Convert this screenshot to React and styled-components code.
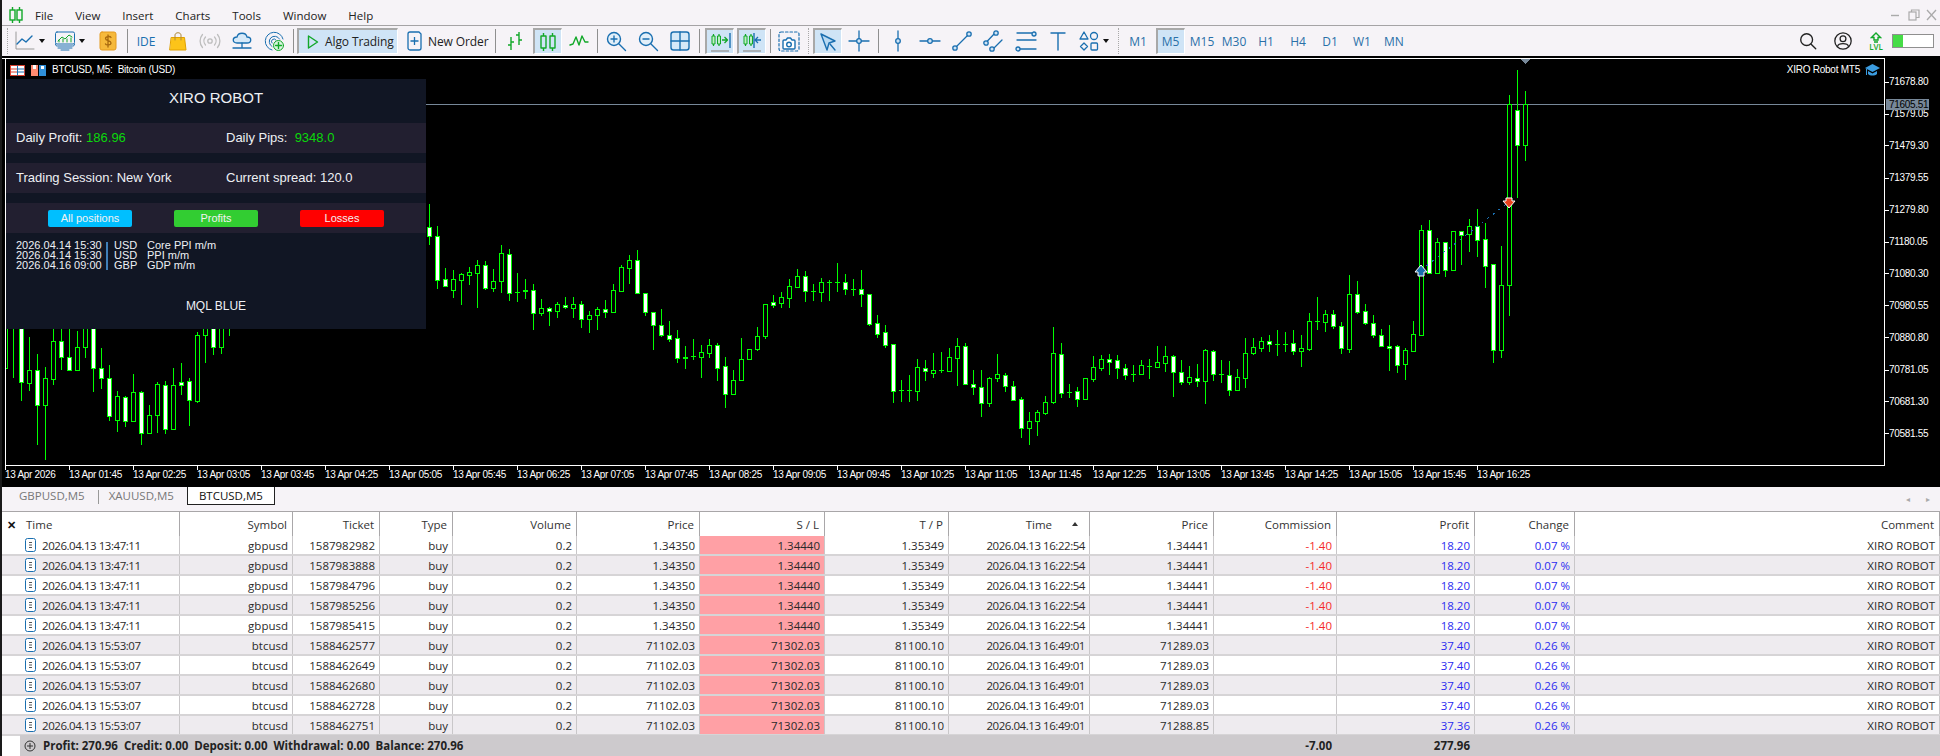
import React from 'react'
import styled, { createGlobalStyle } from 'styled-components'

const BLUE = '#1a6fb0'
const GREEN = '#12a829'
const UI_FONT = '"Open Sans", "Noto Sans", sans-serif'
const CHART_FONT = '"Liberation Sans", Arial, sans-serif'

const Global = createGlobalStyle`
  html, body { margin: 0; padding: 0; background: #f6f3f7; overflow: hidden; }
  * { box-sizing: border-box; }
`

const Page = styled.div`
  position: relative;
  width: 1940px;
  height: 756px;
  overflow: hidden;
  display: flex;
  flex-direction: column;
  background: #f6f3f7;
  font-family: ${UI_FONT};
  color: #222;

  &::before {
    content: '';
    position: absolute;
    left: 0;
    top: 0;
    bottom: 0;
    width: 2px;
    background: #1a1a1a;
    z-index: 3;
  }
`

/* menu */
const MenuBar = styled.div`
  height: 26px;
  flex: none;
  display: flex;
  align-items: center;
  padding: 5px 0 0 9px;
  border-bottom: 1px solid #a5a3a5;
  font-size: 11.5px;
`
const MenuItems = styled.div`
  display: flex;
  gap: 22px;
  margin-left: 12px;
`
const WindowButtons = styled.div`
  margin-left: auto;
  display: flex;
  align-items: center;
  gap: 4px;
  padding-right: 1px;
`

/* toolbar */
const Toolbar = styled.div`
  height: 30px;
  flex: none;
  display: flex;
  align-items: center;
  padding-left: 2px;
  font-size: 12px;
`
const Tool = styled.div`
  flex: none;
  width: ${p => p.$w || 29}px;
  margin: 0 ${p => (p.$w ? 0 : 1.5)}px;
  height: 26px;
  display: flex;
  align-items: center;
  justify-content: center;
  color: ${BLUE};
  ${p => p.$active && `
    background: #cfe4f6;
    border-left: 2px solid #a8a8a8;
    border-top: 2px solid #a8a8a8;
    border-right: 1px solid #fff;
    border-bottom: 1px solid #fff;
  `}
`
const Tf = styled(Tool)`
  font-size: 12px;
  color: #2a70a8;
`
const Drop = styled.div`
  flex: none;
  width: ${p => p.$w || 38}px;
  margin-right: ${p => (p.$w ? 0 : 2)}px;
  padding-left: ${p => (p.$w ? 4 : 2)}px;
  display: flex;
  align-items: center;
  gap: 2px;
`
const Arrow = styled.span`
  width: 0;
  height: 0;
  margin-left: 1px;
  border-left: 3.5px solid transparent;
  border-right: 3.5px solid transparent;
  border-top: 4px solid #111;
`
const Sep = styled.div`
  flex: none;
  width: ${p => p.$w || 6}px;
  height: 24px;
  display: flex;
  justify-content: center;

  &::after {
    content: '';
    width: 1px;
    background: #8f8f8f;
  }
`
const Grip = styled.div`
  flex: none;
  width: ${p => p.$w || 6}px;
  height: 26px;
  display: flex;
  justify-content: center;

  &::after {
    content: '';
    border-left: 1px dotted #a8a8a8;
  }
`
const TextButton = styled.div`
  flex: none;
  width: ${p => p.$w}px;
  margin-left: ${p => p.$ml || 0}px;
  height: 26px;
  display: flex;
  align-items: center;
  gap: 6px;
  padding-left: ${p => p.$pl}px;
  white-space: nowrap;
  letter-spacing: -0.1px;
  ${p => p.$active && `
    background: #cfe4f6;
    border-left: 2px solid #a8a8a8;
    border-top: 2px solid #a8a8a8;
    border-right: 1px solid #fff;
    border-bottom: 1px solid #fff;
  `}
`
const RightTools = styled.div`
  margin-left: auto;
  padding-right: 6px;
  display: flex;
  align-items: center;
`
const Level = styled.div`
  width: 42px;
  height: 14px;
  border: 1px solid #8f8f8f;
  background: #fff;
`
const LevelFill = styled.div`
  width: 10px;
  height: 100%;
  background: #46dc46;
`
const LevelIcon = styled.div`
  display: flex;
  flex-direction: column;
  align-items: center;
  color: #12a829;
  font-size: 8px;
  line-height: 8px;
  font-weight: 600;
`

/* chart */
const ChartArea = styled.div`
  position: relative;
  height: 431px;
  flex: none;
  background: #000;
`
const ChartSvg = styled.svg`
  display: block;

  text {
    font-family: ${CHART_FONT};
    font-size: 10px;
    letter-spacing: -0.3px;
    fill: #fff;
  }
`
const ChartTitle = styled.div`
  position: absolute;
  left: 10px;
  top: 7px;
  display: flex;
  align-items: center;
  gap: 6px;
  color: #fff;
  font: 10px/14px ${CHART_FONT};
  letter-spacing: -0.25px;
  white-space: pre;
`
const RobotLabel = styled.div`
  position: absolute;
  right: 60px;
  top: 7px;
  display: flex;
  align-items: center;
  gap: 5px;
  color: #fff;
  font: 10px/14px ${CHART_FONT};
  letter-spacing: -0.25px;
`

/* panel on the chart */
const Panel = styled.div`
  position: absolute;
  left: 6px;
  top: 23px;
  width: 420px;
  height: 250px;
  display: flex;
  flex-direction: column;
  background: #111624;
  color: #eef0f4;
  font-family: ${CHART_FONT};
`
const PanelTitle = styled.div`
  height: 44px;
  flex: none;
  display: flex;
  align-items: center;
  justify-content: center;
  padding-bottom: 8px;
  font-size: 15px;
`
const StatRow = styled.div`
  height: 30px;
  flex: none;
  margin-bottom: 10px;
  display: grid;
  grid-template-columns: 210px 1fr;
  align-items: center;
  padding: 0 0 2px 10px;
  background: #221f30;
  font-size: 13px;
  white-space: pre;
`
const Good = styled.span`
  color: #0bd80b;
`
const ButtonRow = styled.div`
  height: 30px;
  flex: none;
  display: flex;
  align-items: center;
  gap: 42px;
  padding-left: 42px;
  background: #221f30;
`
const PanelButton = styled.div`
  width: 84px;
  height: 17px;
  border-radius: 2px;
  display: flex;
  align-items: center;
  justify-content: center;
  padding-bottom: 1px;
  background: ${p => p.$bg};
  color: #f2f2f2;
  font-size: 11px;
`
const News = styled.div`
  display: flex;
  padding: 9px 0 0 10px;
  font-size: 11px;
  line-height: 10px;
`
const NewsCol = styled.div`
  width: ${p => p.$w}px;
  margin-top: -2px;
  white-space: nowrap;
`
const NewsBar = styled.div`
  width: 2px;
  margin: 0 6px 0 0;
  background: #3f7fb8;
`
const PanelFoot = styled.div`
  height: 44px;
  margin-top: auto;
  display: flex;
  align-items: center;
  justify-content: center;
  padding-bottom: 2px;
  font-size: 12px;
`

/* tabs */
const TabBar = styled.div`
  height: 25px;
  flex: none;
  display: flex;
  align-items: flex-start;
  padding-left: 19px;
  border-bottom: 1px solid #a8a6a8;
  font-size: 11.5px;
`
const Tab = styled.div`
  height: 18px;
  padding-top: 1px;
  line-height: 16px;
  color: ${p => (p.$active ? '#111' : '#777')};
  ${p => p.$active && `
    width: 88px;
    text-align: center;
    background: #fff;
    border: 1px solid #222;
    border-top: none;
    margin-left: 13px;
  `}
`
const TabDivider = styled.div`
  width: 1px;
  height: 14px;
  margin: 3px 10px 0 13px;
  background: #999;
`
const TabArrows = styled.div`
  margin-left: auto;
  display: flex;
  gap: 16px;
  padding: 6px 10px 0 0;
  color: #aaa;
  font-size: 8px;
`

/* trade table */
const REST_COLUMNS = '113px 87px 73px 124px 123px 125px 124px 141px 124px 123px 138px 100px 1fr'

const Table = styled.div`
  flex: 1;
  display: flex;
  flex-direction: column;
  background: #fff;
  font-size: 11.5px;
`
const Row = styled.div`
  display: grid;
  grid-template-columns: 180px ${REST_COLUMNS};
  height: ${p => p.$h || 20}px;
  flex: none;
  background: ${p => (p.$alt ? '#eeebef' : '#fff')};
  border-bottom: ${p => (p.$plain ? 'none' : '2px solid #d6d4d6')};
`
const Cell = styled.div`
  display: flex;
  align-items: center;
  justify-content: flex-end;
  padding-right: 4px;
  border-right: 1px solid #c9c7c9;
  white-space: nowrap;
  color: ${p => p.$color || '#2a2a2a'};
  ${p => p.$tight && 'letter-spacing: -0.45px;'}
  ${p => p.$pink && 'background: #ffa0a5;'}
`
const HeadCell = styled(Cell)`
  padding-right: 5px;
  border-right: 1px solid #a9a7a9;
  color: #333;
`
const SortCell = styled(HeadCell)`
  gap: 20px;
  padding-right: 11px;
`
const SortMark = styled.span`
  width: 0;
  height: 0;
  border-left: 3px solid transparent;
  border-right: 3px solid transparent;
  border-bottom: 4px solid #333;
`
const FirstHead = styled(HeadCell)`
  justify-content: flex-start;
  padding-left: 7px;
  gap: 10px;
`
const Close = styled.span`
  font-weight: 700;
  font-size: 11px;
  color: #111;
`
const FirstCell = styled(Cell)`
  justify-content: flex-start;
  padding-left: 25px;
  gap: 6px;
`
const Summary = styled.div`
  display: grid;
  grid-template-columns: 160px ${REST_COLUMNS};
  height: 21px;
  flex: none;
  margin-left: 20px;
  margin-top: -1px;
  background: #cdcacd;
  font-weight: 700;
  font-size: 11.5px;
  color: #222;
`
const SummaryText = styled.div`
  grid-column: 1 / span 10;
  display: flex;
  align-items: center;
  gap: 7px;
  padding-left: 4px;
  white-space: pre;
`
const SummaryNum = styled.div`
  display: flex;
  align-items: center;
  justify-content: flex-end;
  padding-right: 5px;
`

/* icons */
const Svg = ({ s = 22, children, ...rest }) => (
  <svg width={s} height={s} viewBox="0 0 22 22" fill="none" strokeLinecap="round" strokeLinejoin="round" {...rest}>
    {children}
  </svg>
)

const Logo = () => (
  <svg width="14" height="18" viewBox="0 0 14 18" fill="none" stroke="#12a829" strokeWidth="1.4">
    <path d="M3.5 1v16M10.5 1v16" />
    <rect x="1" y="4" width="5" height="10" fill="#f6f3f7" />
    <rect x="8" y="4" width="5" height="10" fill="#f6f3f7" />
  </svg>
)
const LineChartIcon = () => (
  <Svg>
    <path d="M2 2v17h18" stroke="#999" />
    <path d="M3 14l5-5 4 3 6-6" stroke={BLUE} strokeWidth="1.4" />
  </Svg>
)
const MonitorIcon = () => (
  <Svg>
    <rect x="1.5" y="2" width="19" height="12" rx="1.5" stroke={BLUE} />
    <path d="M4 11l4-4 3 2 4-4 3 2M5 12v-2M9 12v-3M13 12V9M17 12V8" stroke={GREEN} />
    <path d="M1.5 14c0 2 1 2 2 2h15c1 0 2 0 2-2M4 18h14M7 20h8" stroke={BLUE} />
  </Svg>
)
const DollarIcon = () => (
  <Svg>
    <rect x="3" y="2" width="16" height="18" rx="2" fill="#f6b93b" stroke="#e49a1e" />
    <path d="M14 7.5c-.5-1.3-5.5-1.6-5.5 1 0 2.8 5.5 1.6 5.5 4.4 0 2.5-5 2.3-5.5 1M11 5v12" stroke="#a8690e" strokeWidth="1.3" />
  </Svg>
)
const BagIcon = () => (
  <Svg>
    <path d="M4.5 7.500h13l1.500 12.500h-16z" fill="#fcc419" stroke="#e0a100" />
    <path d="M8 10V5c0-3 6-3 6 0v5" stroke="#b08a3a" />
  </Svg>
)
const SignalIcon = () => (
  <Svg stroke="#bdbdbd" strokeWidth="1.3">
    <circle cx="11" cy="11" r="2.2" />
    <path d="M6.5 7a6 6 0 0 0 0 8M15.5 7a6 6 0 0 1 0 8M3.5 4.500a10 10 0 0 0 0 13M18.5 4.500a10 10 0 0 1 0 13" />
  </Svg>
)
const CloudIcon = () => (
  <Svg stroke={BLUE} strokeWidth="1.3">
    <path d="M6 13c-5 0-5-6 0-6 1-5 9-5 10 0 5 0 5 6 0 6z" fill="#d6e9f8" />
    <path d="M11 13v5M2 18h18" />
  </Svg>
)
const TargetIcon = () => (
  <Svg stroke={BLUE}>
    <path d="M9 20A9 9 0 1 1 20 9M9 16.500A5.500 5.500 0 1 1 16.500 9M9 13a2.500 2.500 0 1 1 4-3" />
    <circle cx="15.500" cy="15.500" r="5" fill="#d9f5df" stroke={GREEN} />
    <path d="M15.500 12.500v6M12.500 15.500h6" stroke={GREEN} strokeWidth="1.4" />
  </Svg>
)
const PlayIcon = () => (
  <svg width="12" height="16" viewBox="0 0 12 16" fill="none" stroke={GREEN} strokeWidth="1.4" strokeLinejoin="round">
    <path d="M1.5 2l9 6-9 6z" />
  </svg>
)
const OrderIcon = () => (
  <svg width="15" height="20" viewBox="0 0 15 20" fill="none" stroke={BLUE} strokeWidth="1.3" strokeLinejoin="round">
    <path d="M1 3a2 2 0 0 1 2-2h9l2 2v14a2 2 0 0 1-2 2H3a2 2 0 0 1-2-2z" />
    <path d="M7.500 6v8M3.500 10h8" />
  </svg>
)
const BarsIcon = () => (
  <Svg stroke={GREEN} strokeWidth="1.4" strokeLinecap="butt">
    <path d="M7 7v13M4 15h3M7 12h3M15 2v13M12 5h3M15 10h3" />
  </Svg>
)
const CandlesIcon = () => (
  <Svg stroke={GREEN} strokeWidth="1.4" strokeLinecap="butt">
    <path d="M6.500 2v18M15.500 2v18" />
    <rect x="4" y="5" width="5" height="12" fill="#cfe4f6" />
    <rect x="13" y="5" width="5" height="12" fill="#cfe4f6" />
  </Svg>
)
const LineIcon = () => (
  <Svg stroke={GREEN} strokeWidth="1.4">
    <path d="M2 15l3-1 3-7 3 8 3-9 3 6 3 0" />
  </Svg>
)
const ZoomIcon = ({ plus }) => (
  <Svg stroke={BLUE} strokeWidth="1.4">
    <circle cx="9" cy="9" r="6.500" fill="#e2eff9" />
    <path d="M14 14l6.500 6.500M6 9h6" />
    {plus && <path d="M9 6v6" />}
  </Svg>
)
const GridIcon = () => (
  <Svg stroke={BLUE} strokeWidth="1.4">
    <rect x="2" y="2" width="18" height="18" rx="2.500" fill="#d6e9f8" />
    <path d="M11 2v18M2 11h18" />
  </Svg>
)
const ShiftIcon = ({ back }) => (
  <Svg strokeLinecap="butt">
    <path d="M4.500 3v12M10 3v12" stroke={GREEN} strokeWidth="1.2" />
    <rect x="3" y="5" width="3" height="8" fill="#bdf0c4" stroke={GREEN} />
    <rect x="8.500" y="5" width="3" height="8" fill="#bdf0c4" stroke={GREEN} />
    <path d={back ? 'M20 9h-6M17 6l-3 3 3 3' : 'M13 9h5M15.500 6l3 3-3 3'} stroke={back ? BLUE : GREEN} strokeWidth="1.3" />
    <path d={back ? 'M13 2v15' : 'M21 2v15'} stroke={BLUE} strokeWidth="1.4" />
    <path d="M2 20h18" stroke="#9a9a9a" strokeWidth="1.4" />
  </Svg>
)
const ShotIcon = () => (
  <Svg stroke={BLUE} strokeWidth="1.2">
    <rect x="1" y="2" width="20" height="19" rx="2" strokeDasharray="2.500 2" />
    <path d="M6 10h2l1.500-2h3l1.500 2h2a1 1 0 0 1 1 1v7a1 1 0 0 1-1 1H6a1 1 0 0 1-1-1v-7a1 1 0 0 1 1-1z" fill="#fff" strokeWidth="1.4" />
    <circle cx="11" cy="14.500" r="2.300" strokeWidth="1.4" />
  </Svg>
)
const CursorIcon = () => (
  <Svg stroke={BLUE} strokeWidth="1.4">
    <path d="M4 3l14 7-6 2-2 7z" fill="#b8d9f2" />
    <path d="M13 13l5 6" />
  </Svg>
)
const CrossIcon = () => (
  <Svg stroke={BLUE} strokeWidth="1.3">
    <path d="M11 1v20M1 11h20" />
    <circle cx="11" cy="11" r="2.300" fill="#cfe4f6" />
  </Svg>
)
const VLineIcon = () => (
  <Svg stroke={BLUE} strokeWidth="1.3">
    <path d="M11 1v20" />
    <circle cx="11" cy="11" r="2.300" fill="#cfe4f6" />
  </Svg>
)
const HLineIcon = () => (
  <Svg stroke={BLUE} strokeWidth="1.3">
    <path d="M1 11h20" />
    <circle cx="11" cy="11" r="2.300" fill="#cfe4f6" />
  </Svg>
)
const TrendIcon = () => (
  <Svg stroke={BLUE} strokeWidth="1.3">
    <path d="M5 17L17 5" />
    <circle cx="4" cy="18" r="2.200" fill="#cfe4f6" />
    <circle cx="18" cy="4" r="2.200" fill="#cfe4f6" />
  </Svg>
)
const ChannelIcon = () => (
  <Svg stroke={BLUE} strokeWidth="1.3">
    <path d="M3.500 12L12 3M10 19l9-9" />
    <circle cx="3" cy="13" r="2.200" fill="#cfe4f6" />
    <circle cx="13" cy="3" r="2.200" fill="#cfe4f6" />
    <circle cx="9" cy="19" r="2.200" fill="#cfe4f6" />
  </Svg>
)
const FiboIcon = () => (
  <Svg stroke={BLUE} strokeWidth="1.3">
    <path d="M2 3h15M2 10h19M5 19h16" />
    <circle cx="19" cy="4" r="2" fill="#cfe4f6" />
    <circle cx="3" cy="19" r="2" fill="#cfe4f6" />
  </Svg>
)
const TextToolIcon = () => (
  <Svg stroke={BLUE} strokeWidth="1.4">
    <path d="M4 3h14M11 3v17" />
  </Svg>
)
const ShapesIcon = () => (
  <Svg stroke={BLUE} strokeWidth="1.3">
    <path d="M6 2l4 7H2z" />
    <circle cx="16" cy="6" r="3.500" />
    <path d="M6 13l3.500 3.500L6 20l-3.500-3.500z" />
    <rect x="13" y="13" width="6.500" height="7" rx="1" />
  </Svg>
)
const SearchIcon = () => (
  <Svg s={20} stroke="#222" strokeWidth="1.5">
    <circle cx="9.500" cy="9.500" r="6.500" />
    <path d="M14.500 14.500l5 5" />
  </Svg>
)
const UserIcon = () => (
  <Svg s={20} stroke="#222" strokeWidth="1.4">
    <circle cx="11" cy="11" r="9" />
    <circle cx="11" cy="8.500" r="3.200" />
    <path d="M5 17c1-4 11-4 12 0" />
  </Svg>
)
const UpIcon = () => (
  <svg width="12" height="11" viewBox="0 0 12 11" fill="none" stroke="#12a829" strokeWidth="1.4">
    <path d="M6 1L1.500 5.500h2.500v2.500h4V5.500h2.500zM4 10h4" />
  </svg>
)
const WinMin = () => (
  <svg width="14" height="14" viewBox="0 0 14 14" stroke="#aaa" strokeWidth="1.4"><path d="M2 7.500h8" /></svg>
)
const WinRestore = () => (
  <svg width="14" height="14" viewBox="0 0 14 14" fill="none" stroke="#aaa" strokeWidth="1.2">
    <rect x="2" y="4" width="7" height="8" /><path d="M4.500 4V2H12v7.500H9" />
  </svg>
)
const WinClose = () => (
  <svg width="14" height="14" viewBox="0 0 14 14" stroke="#aaa" strokeWidth="1.3"><path d="M2 2l9 10M11 2l-9 10" /></svg>
)
const TableIcon = () => (
  <svg width="15" height="11" viewBox="0 0 15 11" stroke="#d8412f" fill="#fff">
    <rect x="0.500" y="0.500" width="14" height="10" />
    <path d="M0.500 4h6.500M0.500 7h6.500" />
    <path d="M7.500 0.500v10M8 4h6.500M8 7h6.500" stroke="#1a6fb0" />
  </svg>
)
const DepthIcon = () => (
  <svg width="15" height="11" viewBox="0 0 15 11">
    <rect x="0" y="0" width="7" height="11" fill="#ff8a70" />
    <rect x="2" y="0" width="3" height="4" fill="#fff" />
    <rect x="8" y="0" width="7" height="11" fill="#2f8fd8" />
    <rect x="10" y="1" width="3" height="3" fill="#fff" />
  </svg>
)
const CapIcon = () => (
  <svg width="15" height="14" viewBox="0 0 15 14" fill="#3b9ce0">
    <path d="M7.500 1L15 5 7.500 9 0 5z" />
    <path d="M3 8v3c2 2 7 2 9 0V8L7.500 10.500z" />
    <rect x="1" y="6" width="1" height="6" />
  </svg>
)
const OrderRowIcon = () => (
  <svg width="11" height="14" viewBox="0 0 11 14" fill="#fff" stroke="#1a6fb0">
    <rect x="0.500" y="0.500" width="10" height="13" rx="2" />
    <path d="M4 4.500h3M4 7h3M4 9.500h3" stroke="#555" />
  </svg>
)
const PlusCircle = () => (
  <svg width="12" height="12" viewBox="0 0 12 12" fill="none" stroke="#333">
    <circle cx="6" cy="6" r="5" />
    <path d="M6 3v6M3 6h6" />
  </svg>
)

/* [high, body top, body bottom, low, white body], bars 29..52 sit under the panel */
const BARS = [
  [320, 325, 368, 368, 0], [300, 305, 320, 378, 0], [300, 305, 381.7, 401, 1], [337.3, 370.3, 383.3, 391, 0],
  [354, 370, 404.7, 445, 1], [367, 378.3, 404.7, 460, 0], [320, 341, 378.7, 385, 0], [320, 341, 356.7, 370, 1],
  [320, 356.7, 369.7, 370, 1], [331, 347, 369.7, 370.7, 0], [320, 325, 347, 358, 0], [320, 325, 367.7, 391.7, 1],
  [348.3, 368.3, 378.3, 389, 1], [365, 378.3, 416.3, 421, 1], [391, 396.3, 419.7, 432, 0], [396, 397.3, 420.7, 427, 1],
  [374.3, 392.3, 420.7, 421.7, 0], [391, 392.3, 432.7, 445, 1], [405, 415.3, 433, 434, 0], [381.7, 384.3, 415.3, 432.7, 0],
  [380.7, 384.7, 428.7, 434, 1], [368, 385.3, 428.7, 429, 0], [363, 382.3, 385.3, 395.3, 1], [378.3, 381.3, 400.3, 426, 1],
  [332.3, 335.3, 401, 402.7, 0], [320, 325, 335.3, 363.3, 0], [320, 325, 347.3, 355, 1], [320, 325, 347.3, 354, 0],
  [320, 322, 325, 336, 0],
  ...Array(24).fill(null),
  [204, 226.7, 236.3, 245, 1], [226, 236.3, 279.7, 289, 1], [268.3, 278.7, 285.7, 286, 1], [270, 279.3, 289.7, 298, 0],
  [273, 274.3, 279.7, 305, 0], [267.3, 272.3, 274.7, 285, 0], [260.3, 265.3, 272.7, 308, 0], [261.3, 265.3, 287.7, 290, 1],
  [269.3, 281.3, 287.7, 292, 0], [245.3, 253.3, 280.7, 292.7, 0], [249.3, 254.3, 292.7, 301, 1], [273.3, 292.3, 292.3, 302, 1],
  [279, 290.3, 291.3, 299, 1], [284, 290.3, 312.7, 330, 1], [299, 308.3, 312.7, 316, 0], [307.3, 308.3, 310.7, 326, 1],
  [302, 304.3, 310.7, 318, 0], [297.3, 304.7, 306.7, 308.7, 1], [297.3, 304.3, 307.7, 318, 0], [301.3, 304.3, 318.7, 328, 1],
  [311.3, 314.7, 318.7, 333, 0], [307.3, 309.3, 314.7, 330, 0], [300, 309.3, 311.7, 318, 1], [284, 290.3, 311.7, 312.3, 0],
  [265.3, 267.3, 290.7, 291, 0], [255.3, 260.3, 267.7, 284, 0], [250.3, 260.3, 292.7, 294, 1], [292.7, 292.7, 311.7, 316, 1],
  [311.7, 311.7, 324.7, 350, 1], [309, 324.7, 334.7, 337, 1], [321, 334.7, 338.7, 342, 1], [330, 337.7, 357.7, 363, 1],
  [346, 356.7, 357.7, 369, 1], [339, 356.3, 356.3, 360, 1], [345, 351.7, 356.7, 378, 0], [339, 345.3, 352.7, 358, 0],
  [343.3, 345.3, 367.7, 381, 1], [357, 365.7, 393.7, 408, 1], [370, 379.7, 393.7, 394, 0], [338, 358.7, 379.7, 380, 0],
  [348.7, 348.7, 358.7, 360, 0], [327, 335.7, 348.7, 351, 0], [304.3, 304.3, 335.7, 339, 0], [295, 302.3, 304.7, 308, 1],
  [292, 297.3, 302.7, 308, 0], [279.3, 286.3, 297.7, 308, 0], [269.3, 276.3, 286.7, 288, 0], [271, 276.3, 290.7, 302, 1],
  [284, 290.7, 290.7, 301, 1], [278.3, 282.3, 291.7, 302, 0], [280.3, 282, 282, 301, 1], [263.3, 282.3, 282.3, 292, 1],
  [274, 282.3, 288.7, 295, 1], [279, 288.7, 288.7, 296, 1], [270, 289.3, 293.7, 307, 1], [294.3, 294.3, 323.7, 326, 1],
  [315.3, 323.3, 333.7, 338, 1], [325.3, 332.3, 344.7, 348, 1], [344.3, 344.3, 390.7, 403, 1],
  [380, 390, 390, 402, 1], [375.3, 390, 390, 402, 1], [359.3, 367.3, 390.7, 401, 0], [360, 367.7, 370.7, 381, 1],
  [353.3, 370.3, 372.7, 378.3, 0], [352, 370.3, 370.3, 372.7, 1], [348.3, 357.3, 370.7, 370.7, 0], [338.3, 346.3, 357.7, 386, 0],
  [343.3, 346.3, 384, 385, 1], [370, 383.7, 386.7, 395.3, 1], [370, 386.7, 402.7, 417, 1], [377.3, 378.3, 402.7, 407, 0],
  [354, 374.3, 377.7, 382, 0], [373.3, 374.7, 385.7, 392, 1], [381.3, 385.7, 400, 401, 1], [397.3, 399.3, 427.7, 438, 1],
  [412.3, 421.3, 427.7, 445, 0], [410, 412.3, 421, 436, 0], [396, 402.3, 413, 415, 0], [327, 353.3, 401.7, 404, 0],
  [343.3, 354.3, 392.7, 398, 1], [384, 392, 392, 398, 1], [387.3, 391.3, 399, 407, 1], [378.3, 378.3, 399, 399, 0],
  [356, 367.3, 378.7, 382, 0], [355.3, 359.3, 367.7, 370.7, 0], [354, 359.3, 361.7, 375.3, 1], [355.3, 360.3, 367.7, 379, 1],
  [364, 367.7, 374.7, 379.7, 1], [365.3, 374, 374, 382, 1], [360, 365.3, 374, 374.3, 0], [359.3, 366.3, 366.3, 379, 1],
  [346, 362.3, 366.7, 367.3, 0], [346, 356.3, 362.7, 372, 0], [355.3, 356.3, 371.7, 397, 1], [360, 371.7, 381.7, 385, 1],
  [366, 377.3, 381.7, 385, 0], [364, 377.7, 380.7, 387, 1], [349.3, 350.3, 380.7, 404, 0], [350.3, 351.3, 373.7, 381, 1],
  [360, 374, 374, 383, 1], [361.3, 374.7, 389.7, 396, 1], [369.3, 377.3, 389.7, 390.7, 0], [338.3, 353.3, 377.7, 388, 0],
  [338.3, 347.3, 353.3, 355.3, 0], [337, 341.3, 347.7, 352.3, 0], [335, 341.3, 344.3, 352, 1], [330.3, 344.3, 344.3, 356, 1],
  [332, 343.7, 343.7, 352.3, 1], [330.3, 343.3, 351.3, 355.3, 1], [335, 348.3, 351.3, 367, 0], [313.3, 321.3, 348.7, 350.7, 0],
  [297.3, 321.3, 321.3, 330, 1], [310, 314.3, 321.7, 332, 0], [310.3, 314.3, 325.7, 329.3, 1], [322.3, 325.7, 348.3, 354, 1],
  [275, 294.3, 348.7, 352.7, 0], [281, 294.3, 311.7, 314, 1], [304, 310.7, 322.7, 325, 1], [315.3, 322.7, 334.7, 337.7, 1],
  [329, 334.7, 345.7, 346.7, 1], [325, 345.7, 347.7, 371, 1], [345, 346.3, 364.7, 373, 1], [348.3, 350.3, 363.7, 380, 0],
  [321.3, 334.3, 350.7, 350.7, 0], [225, 230.3, 334.7, 334.7, 0], [220, 230.3, 272.7, 273.3, 1], [238.3, 242.3, 272.7, 273.7, 0],
  [242.3, 242.3, 269.7, 276.7, 1], [231.3, 231.3, 269.7, 269.7, 0], [231.3, 231.3, 234.7, 265, 1], [219, 226.3, 234.3, 252, 0],
  [209, 226.3, 239.7, 257, 1], [223.3, 239.3, 265.7, 287.7, 1], [264.3, 264.3, 349.7, 362.7, 1], [246, 285.3, 349.7, 358, 0],
  [95, 104.3, 285.3, 315.7, 0], [70, 110, 145.3, 197.7, 1], [91, 104.3, 144.7, 160.7, 0]
]

const PRICES = [
  [81.7, '71678.80'], [113.7, '71579.05'], [145, '71479.30'], [177.7, '71379.55'], [209.5, '71279.80'], [241.7, '71180.05'],
  [273, '71080.30'], [305, '70980.55'], [337, '70880.80'], [369.7, '70781.05'], [401, '70681.30'], [433, '70581.55']
]
const TIMES = ['13 Apr 2026', '13 Apr 01:45', '13 Apr 02:25', '13 Apr 03:05', '13 Apr 03:45', '13 Apr 04:25', '13 Apr 05:05', '13 Apr 05:45',
  '13 Apr 06:25', '13 Apr 07:05', '13 Apr 07:45', '13 Apr 08:25', '13 Apr 09:05', '13 Apr 09:45', '13 Apr 10:25', '13 Apr 11:05', '13 Apr 11:45',
  '13 Apr 12:25', '13 Apr 13:05', '13 Apr 13:45', '13 Apr 14:25', '13 Apr 15:05', '13 Apr 15:45', '13 Apr 16:25']

const Candle = ({ bar, i }) => {
  const [hi, top, bottom, lo, white] = bar
  const x = 5 + 8 * i
  const t = Math.round(top) + 0.5
  const b = Math.round(bottom) + 0.5
  return (
    <g>
      <path d={`M${x + 0.5} ${Math.round(hi)}V${Math.round(lo)}`} stroke="#00ff00" />
      {b - t < 1
        ? <path d={`M${x - 2} ${t}H${x + 3}`} stroke="#00ff00" />
        : <rect x={x - 1.5} y={t} width={4} height={b - t} fill={white ? '#fff' : '#000'} stroke="#00ff00" />}
    </g>
  )
}

const PriceChart = () => (
  <ChartSvg width="1940" height="431" viewBox="0 56 1940 431" shapeRendering="crispEdges">
    <defs>
      <clipPath id="plot"><rect x="6" y="59" width="1878" height="406" /></clipPath>
    </defs>
    <g clipPath="url(#plot)">
      <path d="M6 104.500H1884" stroke="#778899" />
      {BARS.map((bar, i) => bar && <Candle key={i} bar={bar} i={i} />)}
      <path d="M1421 270L1509 202" stroke="#1a6fb0" strokeDasharray="2 5" fill="none" />
      <path d="M1421 265l6 7h-3v4h-6v-4h-3z" fill="#1a6fb0" stroke="#fff" shapeRendering="auto" />
      <path d="M1509 208l6-7h-3v-3h-6v3h-3z" fill="#e8401c" stroke="#fff" shapeRendering="auto" />
    </g>
    <path d="M1520 59h10l-5 5z" fill="#778899" />
    <path d="M0 58.500H1885M5.500 58V466M1884.500 58V466M5 465.500H1885" stroke="#fff" fill="none" />
    {PRICES.map(([y, label]) => (
      <g key={label}>
        <path d={`M1885 ${Math.round(y) + 0.5}h4`} stroke="#fff" />
        <text x="1889" y={y + 3.5}>{label}</text>
      </g>
    ))}
    <rect x="1886" y="99" width="43" height="11" fill="#778899" />
    <text x="1889" y="108" style={{ fill: '#000' }}>71605.51</text>
    {TIMES.map((label, i) => (
      <g key={label}>
        <path d={`M${5.5 + 64 * i} 466v4`} stroke="#fff" />
        <text x={5 + 64 * i} y="478">{label}</text>
      </g>
    ))}
  </ChartSvg>
)

const TRADES = [
  ['2026.04.13 13:47:11', 'gbpusd', '1587982982', '1.34350', '1.34440', '1.35349', '2026.04.13 16:22:54', '1.34441', '-1.40', '18.20', '0.07 %'],
  ['2026.04.13 13:47:11', 'gbpusd', '1587983888', '1.34350', '1.34440', '1.35349', '2026.04.13 16:22:54', '1.34441', '-1.40', '18.20', '0.07 %'],
  ['2026.04.13 13:47:11', 'gbpusd', '1587984796', '1.34350', '1.34440', '1.35349', '2026.04.13 16:22:54', '1.34441', '-1.40', '18.20', '0.07 %'],
  ['2026.04.13 13:47:11', 'gbpusd', '1587985256', '1.34350', '1.34440', '1.35349', '2026.04.13 16:22:54', '1.34441', '-1.40', '18.20', '0.07 %'],
  ['2026.04.13 13:47:11', 'gbpusd', '1587985415', '1.34350', '1.34440', '1.35349', '2026.04.13 16:22:54', '1.34441', '-1.40', '18.20', '0.07 %'],
  ['2026.04.13 15:53:07', 'btcusd', '1588462577', '71102.03', '71302.03', '81100.10', '2026.04.13 16:49:01', '71289.03', '', '37.40', '0.26 %'],
  ['2026.04.13 15:53:07', 'btcusd', '1588462649', '71102.03', '71302.03', '81100.10', '2026.04.13 16:49:01', '71289.03', '', '37.40', '0.26 %'],
  ['2026.04.13 15:53:07', 'btcusd', '1588462680', '71102.03', '71302.03', '81100.10', '2026.04.13 16:49:01', '71289.03', '', '37.40', '0.26 %'],
  ['2026.04.13 15:53:07', 'btcusd', '1588462728', '71102.03', '71302.03', '81100.10', '2026.04.13 16:49:01', '71289.03', '', '37.40', '0.26 %'],
  ['2026.04.13 15:53:07', 'btcusd', '1588462751', '71102.03', '71302.03', '81100.10', '2026.04.13 16:49:01', '71288.85', '', '37.36', '0.26 %']
]

const App = () => (
  <Page>
    <Global />
    <MenuBar>
      <Logo />
      <MenuItems>
        {['File', 'View', 'Insert', 'Charts', 'Tools', 'Window', 'Help'].map(m => <span key={m}>{m}</span>)}
      </MenuItems>
      <WindowButtons><WinMin /><WinRestore /><WinClose /></WindowButtons>
    </MenuBar>

    <Toolbar>
      <Grip $w={10} />
      <Drop><LineChartIcon /><Arrow /></Drop>
      <Drop><MonitorIcon /><Arrow /></Drop>
      <Tool><DollarIcon /></Tool>
      <Sep />
      <Tool>IDE</Tool>
      <Tool><BagIcon /></Tool>
      <Tool><SignalIcon /></Tool>
      <Tool><CloudIcon /></Tool>
      <Tool><TargetIcon /></Tool>
      <Sep />
      <TextButton $w={101} $ml={1} $pl={8} $active><PlayIcon />Algo Trading</TextButton>
      <TextButton $w={89} $ml={4} $pl={5}><OrderIcon />New Order</TextButton>
      <Sep $w={8} />
      <Tool><BarsIcon /></Tool>
      <Tool $active><CandlesIcon /></Tool>
      <Tool><LineIcon /></Tool>
      <Sep $w={5} />
      <Tool><ZoomIcon plus /></Tool>
      <Tool><ZoomIcon /></Tool>
      <Tool><GridIcon /></Tool>
      <Sep $w={7} />
      <Tool $active><ShiftIcon /></Tool>
      <Tool $active><ShiftIcon back /></Tool>
      <Sep />
      <Tool><ShotIcon /></Tool>
      <Grip />
      <Tool $active><CursorIcon /></Tool>
      <Tool><CrossIcon /></Tool>
      <Sep $w={7} />
      <Tool><VLineIcon /></Tool>
      <Tool><HLineIcon /></Tool>
      <Tool><TrendIcon /></Tool>
      <Tool><ChannelIcon /></Tool>
      <Tool><FiboIcon /></Tool>
      <Tool><TextToolIcon /></Tool>
      <Drop $w={40}><ShapesIcon /><Arrow /></Drop>
      <Grip $w={8} />
      {['M1', 'M5', 'M15', 'M30', 'H1', 'H4', 'D1', 'W1', 'MN'].map(tf => (
        <Tf key={tf} $active={tf === 'M5'}>{tf}</Tf>
      ))}
      <RightTools>
        <Tool $w={36}><SearchIcon /></Tool>
        <Tool $w={34}><UserIcon /></Tool>
        <Tool $w={32}><LevelIcon><UpIcon />LVL</LevelIcon></Tool>
        <Level><LevelFill /></Level>
      </RightTools>
    </Toolbar>

    <ChartArea>
      <PriceChart />
      <ChartTitle><TableIcon /><DepthIcon />BTCUSD, M5:  Bitcoin (USD)</ChartTitle>
      <RobotLabel>XIRO Robot MT5<CapIcon /></RobotLabel>
      <Panel>
        <PanelTitle>XIRO ROBOT</PanelTitle>
        <StatRow>
          <span>Daily Profit: <Good>186.96</Good></span>
          <span>Daily Pips:  <Good>9348.0</Good></span>
        </StatRow>
        <StatRow>
          <span>Trading Session: New York</span>
          <span>Current spread: 120.0</span>
        </StatRow>
        <ButtonRow>
          <PanelButton $bg="#00bfff">All positions</PanelButton>
          <PanelButton $bg="#32cd32">Profits</PanelButton>
          <PanelButton $bg="#ff0000">Losses</PanelButton>
        </ButtonRow>
        <News>
          <NewsCol $w={90}>
            <div>2026.04.14 15:30</div>
            <div>2026.04.14 15:30</div>
            <div>2026.04.16 09:00</div>
          </NewsCol>
          <NewsBar />
          <NewsCol $w={33}>
            <div>USD</div>
            <div>USD</div>
            <div>GBP</div>
          </NewsCol>
          <NewsCol $w={120}>
            <div>Core PPI m/m</div>
            <div>PPI m/m</div>
            <div>GDP m/m</div>
          </NewsCol>
        </News>
        <PanelFoot>MQL BLUE</PanelFoot>
      </Panel>
    </ChartArea>

    <TabBar>
      <Tab>GBPUSD,M5</Tab>
      <TabDivider />
      <Tab>XAUUSD,M5</Tab>
      <Tab $active>BTCUSD,M5</Tab>
      <TabArrows><span>◂</span><span>▸</span></TabArrows>
    </TabBar>

    <Table>
      <Row $h={24} $plain>
        <FirstHead><Close>✕</Close>Time</FirstHead>
        {['Symbol', 'Ticket', 'Type', 'Volume', 'Price', 'S / L', 'T / P'].map(h => <HeadCell key={h}>{h}</HeadCell>)}
        <SortCell>Time<SortMark /></SortCell>
        {['Price', 'Commission', 'Profit', 'Change', 'Comment'].map(h => <HeadCell key={h}>{h}</HeadCell>)}
      </Row>
      {TRADES.map((t, i) => (
        <Row key={t[2]} $alt={i % 2 === 1}>
          <FirstCell $tight><OrderRowIcon />{t[0]}</FirstCell>
          <Cell>{t[1]}</Cell>
          <Cell>{t[2]}</Cell>
          <Cell>buy</Cell>
          <Cell>0.2</Cell>
          <Cell>{t[3]}</Cell>
          <Cell $pink>{t[4]}</Cell>
          <Cell>{t[5]}</Cell>
          <Cell $tight>{t[6]}</Cell>
          <Cell>{t[7]}</Cell>
          <Cell $color="#f52a2a">{t[8]}</Cell>
          <Cell $color="#2b2bf0">{t[9]}</Cell>
          <Cell $color="#2b2bf0">{t[10]}</Cell>
          <Cell>XIRO ROBOT</Cell>
        </Row>
      ))}
      <Summary>
        <SummaryText><PlusCircle />Profit: 270.96  Credit: 0.00  Deposit: 0.00  Withdrawal: 0.00  Balance: 270.96</SummaryText>
        <SummaryNum>-7.00</SummaryNum>
        <SummaryNum>277.96</SummaryNum>
      </Summary>
    </Table>
  </Page>
)

export default App
